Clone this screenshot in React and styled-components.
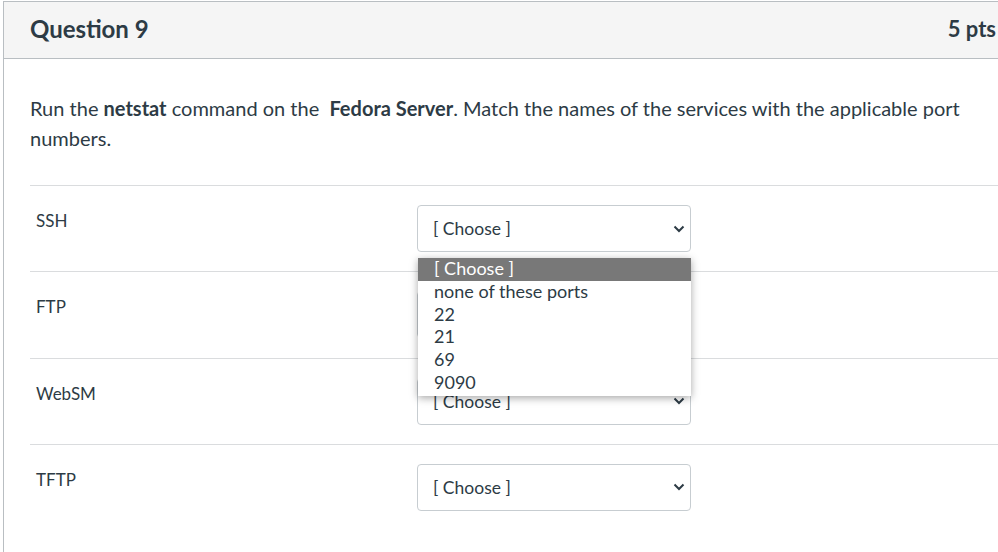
import React from 'react'
import styled, { createGlobalStyle } from 'styled-components'

const GlobalStyle = createGlobalStyle`
    html, body {
        margin: 0;
        padding: 0;
        background: #ffffff;
        overflow: hidden;
    }
    body {
        font-family: Lato, "Open Sans", "Liberation Sans", sans-serif;
        color: #2d3b45;
    }
`;

const Card = styled.div`
    margin: 1px 0 0 3px;
    width: 1010px;
    min-height: 560px;
    border: 1px solid #b9bec2;
    border-right: none;
    box-sizing: border-box;
`;

const Header = styled.div`
    height: 56px;
    background: #f5f5f5;
    border-bottom: 1px solid #b9bec2;
    display: flex;
    align-items: center;
    justify-content: space-between;
    padding: 0 17px 0 26px;
    font-weight: 700;
    color: #2d3b45;
`;

const Title = styled.span`
    font-size: 24px;
    margin-top: -3px;
`;

const Points = styled.span`
    font-size: 22px;
    margin-top: -3px;
`;

const Body = styled.div`
    padding: 34px 0 0 26px;
`;

const Prompt = styled.p`
    margin: 0 0 32px;
    font-size: 20px;
    line-height: 30px;
    padding-right: 30px;

    b {
        font-weight: 700;
    }
`;

const Row = styled.div`
    display: flex;
    border-top: 1px solid #dadcde;
    padding: 19px 0 19.33px;
`;

const Label = styled.div`
    width: 381px;
    padding: 3px 0 0 6px;
    font-size: 17px;
    line-height: 25px;
`;

const SelectWrap = styled.div`
    position: relative;
`;

const SelectBox = styled.div`
    width: 274px;
    height: 47px;
    box-sizing: border-box;
    border: 1px solid #c7cdd1;
    border-radius: 4px;
    background: #fff;
    display: flex;
    align-items: center;
    justify-content: space-between;
    padding: 0 5px 0 15px;
    font-size: 17.5px;
`;

const Chevron = () => (
    <svg width="12" height="8" viewBox="0 0 12 8">
        <path d="M1.5 1.5 L6 6 L10.5 1.5" fill="none" stroke="#2d3b45" strokeWidth="2" />
    </svg>
);

const Popup = styled.div`
    position: absolute;
    top: 53px;
    left: 1px;
    width: 273px;
    background: #fff;
    box-shadow: 0 2px 8px rgba(0, 0, 0, 0.35);
    z-index: 5;
    padding: 0 0 1px;
`;

const Option = styled.div`
    padding-left: 16px;
    height: 22.8px;
    line-height: 21.5px;
    font-size: 18px;
    background: ${({ $active }) => ($active ? '#787878' : 'transparent')};
    color: ${({ $active }) => ($active ? '#ffffff' : '#2d3b45')};
`;

const services = ['SSH', 'FTP', 'WebSM', 'TFTP'];
const options = ['[ Choose ]', 'none of these ports', '22', '21', '69', '9090'];

const App = () => {
    return (
        <>
            <GlobalStyle />
            <Card>
                <Header>
                    <Title>Question 9</Title>
                    <Points>5 pts</Points>
                </Header>
                <Body>
                    <Prompt>
                        Run the <b>netstat</b> command on the&nbsp; <b>Fedora Server</b>. Match the names of the services with the applicable port numbers.
                    </Prompt>
                    {services.map((s, i) => (
                        <Row key={s}>
                            <Label>{s}</Label>
                            <SelectWrap>
                                <SelectBox>
                                    <span>[ Choose ]</span>
                                    <Chevron />
                                </SelectBox>
                                {i === 0 && (
                                    <Popup>
                                        {options.map((o, j) => (
                                            <Option key={o} $active={j === 0}>{o}</Option>
                                        ))}
                                    </Popup>
                                )}
                            </SelectWrap>
                        </Row>
                    ))}
                </Body>
            </Card>
        </>
    )
}

export default App
